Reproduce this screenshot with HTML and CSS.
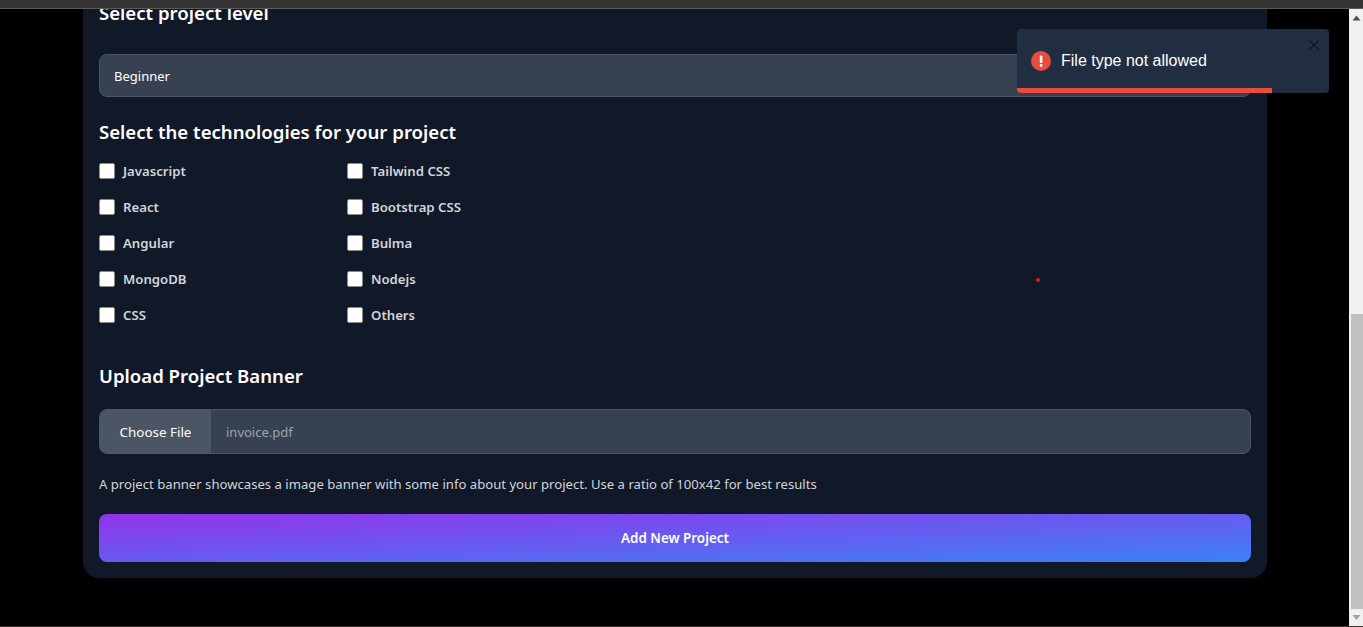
FILE: index.html
```html
<!DOCTYPE html>
<html lang="en">
<head>
<meta charset="utf-8">
<title>Add New Project</title>
<link rel="stylesheet" href="styles.css">
</head>
<body>
<div class="topbar"></div>
<div class="viewport">
  <main class="page">
    <form class="card">
      <h2 class="heading">Select project level</h2>
      <select class="level"><option>Beginner</option></select>
      <h2 class="heading heading-tech">Select the technologies for your project</h2>
      <div class="tech-grid">
        <label class="tech"><input type="checkbox"><span>Javascript</span></label>
        <label class="tech"><input type="checkbox"><span>Tailwind CSS</span></label>
        <label class="tech"><input type="checkbox"><span>React</span></label>
        <label class="tech"><input type="checkbox"><span>Bootstrap CSS</span></label>
        <label class="tech"><input type="checkbox"><span>Angular</span></label>
        <label class="tech"><input type="checkbox"><span>Bulma</span></label>
        <label class="tech"><input type="checkbox"><span>MongoDB</span></label>
        <label class="tech"><input type="checkbox"><span>Nodejs</span></label>
        <label class="tech"><input type="checkbox"><span>CSS</span></label>
        <label class="tech"><input type="checkbox"><span>Others</span></label>
      </div>
      <h2 class="heading heading-upload">Upload Project Banner</h2>
      <div class="file">
        <span class="file-btn">Choose File</span>
        <span class="file-name">invoice.pdf</span>
      </div>
      <p class="hint">A project banner showcases a image banner with some info about your project. Use a ratio of 100x42 for best results</p>
      <button class="submit" type="button">Add New Project</button>
    </form>
  </main>
  <div class="scrollbar">
    <svg class="arrow" width="14" height="17" viewBox="0 0 14 17"><path d="M3.500 11.500 L7.500 6.500 L11.500 11.500 Z" fill="#505050"/></svg>
    <div class="thumb"></div>
    <svg class="arrow" width="14" height="17" viewBox="0 0 14 17"><path d="M3.500 6 L11.500 6 L7.500 11 Z" fill="#a3a3a3"/></svg>
  </div>
  <span class="cursor-dot"></span>
  <div class="toast">
    <svg class="toast-icon" width="20" height="20" viewBox="0 0 20 20"><circle cx="10" cy="10" r="10" fill="#e74c3c"/><rect x="8.800" y="4.500" width="2.600" height="7.500" rx="1" fill="#fff"/><circle cx="10.100" cy="14.500" r="1.400" fill="#fff"/></svg>
    <span class="toast-text">File type not allowed</span>
    <svg class="toast-close" width="10" height="10" viewBox="0 0 10 10"><path d="M0.500 0.500 L9.500 9.500 M9.500 0.500 L0.500 9.500" stroke="#131c2b" stroke-width="1.600"/></svg>
    <div class="toast-progress"></div>
  </div>
</div>
<div class="bottomline"></div>
</body>
</html>
```
FILE: styles.css
```css
* { box-sizing: border-box; }
html, body { height: 100%; }
body {
  margin: 0;
  height: 627px;
  overflow: hidden;
  display: flex;
  flex-direction: column;
  background: #000;
  font-family: "Noto Sans", "Open Sans", sans-serif;
}
.topbar {
  height: 9px;
  flex: none;
  background: #343434;
  border-bottom: 1px solid #5a5a5a;
}
.bottomline {
  height: 1px;
  flex: none;
  background: #3d3533;
}
.viewport {
  position: relative;
  flex: 1;
  min-height: 0;
  display: flex;
}
.page {
  flex: 1;
  min-width: 0;
  overflow: hidden;
  padding-left: 83px;
}
.card {
  width: 1184px;
  height: 579px;
  margin-top: -10px;
  padding: 0 16px;
  background: #111827;
  border-radius: 0 0 16px 16px;
}
.heading {
  margin: 0;
  font-size: 18.6px;
  line-height: 28px;
  font-weight: 600;
  color: #fff;
}
.level {
  display: block;
  width: 100%;
  height: 43px;
  margin-top: 27px;
  padding: 0 14px;
  appearance: none;
  font: 400 13px "Noto Sans", sans-serif;
  color: #fff;
  background: #374151;
  border: 1px solid #4b5563;
  border-radius: 8px;
}
.heading-tech { margin-top: 21px; }
.tech-grid {
  display: grid;
  grid-template-columns: 248px 248px;
  grid-auto-rows: 36px;
  margin-top: 7px;
  width: 496px;
}
.tech {
  display: flex;
  align-items: center;
  gap: 8px;
  font-size: 13.2px;
  font-weight: 600;
  color: #d1d5db;
}
.tech input {
  width: 16px;
  height: 16px;
  margin: 0;
  appearance: none;
  background: #fff;
  border: 1px solid #8b8b8b;
  border-radius: 2px;
}
.heading-upload { margin-top: 29px; }
.file {
  display: flex;
  align-items: stretch;
  height: 45px;
  margin-top: 19px;
  background: #374151;
  border: 1px solid #4b5563;
  border-radius: 8px;
  overflow: hidden;
}
.file-btn {
  display: flex;
  align-items: center;
  justify-content: center;
  width: 111px;
  background: #4b5563;
  color: #fff;
  font-size: 13.4px;
}
.file-name {
  display: flex;
  align-items: center;
  padding-left: 15px;
  color: #9ca3af;
  font-size: 13px;
}
.hint {
  margin: 20px 0 0;
  font-size: 13.13px;
  line-height: 20px;
  color: #d1d5db;
}
.submit {
  display: block;
  width: 100%;
  height: 48px;
  margin-top: 20px;
  padding: 0;
  border: 0;
  border-radius: 8px;
  background: linear-gradient(to bottom right, #9333ea, #3b82f6);
  color: #fff;
  font: 600 13.4px "Noto Sans", sans-serif;
}
.scrollbar {
  flex: none;
  width: 14px;
  display: flex;
  flex-direction: column;
  background: #f1f1f1;
}
.arrow { flex: none; display: block; }
.thumb {
  flex: 1;
  margin: 288px 0 0 2px;
  background: #c1c1c1;
}
.cursor-dot {
  position: absolute;
  left: 1036px;
  top: 269px;
  width: 4px;
  height: 4px;
  border-radius: 50%;
  background: #e3191e;
}
.toast {
  position: absolute;
  left: 1017px;
  top: 20px;
  width: 312px;
  height: 64px;
  display: flex;
  align-items: center;
  padding: 0 0 1px 14px;
  gap: 10px;
  background: #212d40;
  border-radius: 4px;
  overflow: hidden;
}
.toast-icon { flex: none; }
.toast-text {
  font-family: "Liberation Sans", Arial, sans-serif;
  font-size: 16px;
  color: #fff;
}
.toast-close {
  position: absolute;
  right: 10px;
  top: 11px;
}
.toast-progress {
  position: absolute;
  left: 0;
  bottom: 0;
  width: 255px;
  height: 5px;
  background: #e74c3c;
}
```
